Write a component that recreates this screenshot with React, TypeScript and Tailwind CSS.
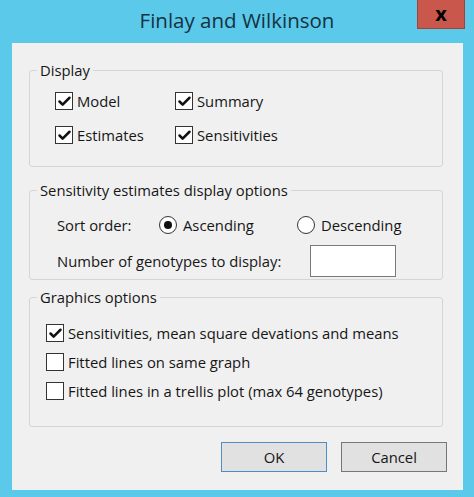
import { Check } from "lucide-react";

const font = { fontFamily: '"Open Sans", "Noto Sans", sans-serif' };

const CheckBox = ({ checked, label }: { checked: boolean; label: string }) => {
  return (
    <label className="flex items-center h-[18px]">
      <span className="w-[18px] h-[18px] border border-[#333333] bg-white flex items-center justify-center shrink-0">
        {checked && <Check size={15} strokeWidth={4} className="text-[#111111]" />}
      </span>
      <span className="ml-[4px] whitespace-nowrap">{label}</span>
    </label>
  );
};

const Radio = ({ checked, label }: { checked: boolean; label: string }) => {
  return (
    <label className="flex items-center h-[18px]">
      <span className="w-[18px] h-[18px] rounded-full border border-[#333333] bg-white flex items-center justify-center shrink-0">
        {checked && <span className="w-[8px] h-[8px] rounded-full bg-[#111111]" />}
      </span>
      <span className="ml-[6px] whitespace-nowrap">{label}</span>
    </label>
  );
};

const Group = ({
  title,
  className,
  children,
}: {
  title: string;
  className: string;
  children: React.ReactNode;
}) => {
  return (
    <fieldset className={`border border-[#d5d5d5] rounded-[3px] p-0 m-0 ${className}`}>
      <legend className="ml-[7px] px-[3px] leading-[20px]">{title}</legend>
      {children}
    </fieldset>
  );
};

export default function App() {
  return (
    <div
      className="w-[474px] h-[497px] bg-[#5bc9ea] flex flex-col text-[14.8px] text-[#161616] overflow-hidden"
      style={font}
    >
      {/* Title bar */}
      <div className="relative h-[43px] shrink-0 flex items-center justify-center">
        <span className="text-[20.5px] text-[#16323f] -mt-[2px]">Finlay and Wilkinson</span>
        <div className="absolute top-0 right-[9px] w-[48px] h-[29px] bg-[#c9574c] border border-[#a1433a] border-t-0 flex items-center justify-center">
          <span className="text-[20px] font-bold text-black leading-[20px]">x</span>
        </div>
      </div>

      {/* Client area */}
      <div className="ml-[12px] mr-[11px] mb-[7px] flex-1 bg-[#f0f0f0] pt-[17px] pl-[17px] pr-[20px]">
        <Group title="Display" className="h-[107px]">
          <div className="grid grid-cols-[120px_120px] gap-y-[16px] pl-[25px] pt-[12px]">
            <CheckBox checked label="Model" />
            <CheckBox checked label="Summary" />
            <CheckBox checked label="Estimates" />
            <CheckBox checked label="Sensitivities" />
          </div>
        </Group>

        <Group title="Sensitivity estimates display options" className="mt-[13px] h-[100px]">
          <div className="pl-[27px] pt-[14px]">
            <div className="flex items-center">
              <span className="w-[102px]">Sort order:</span>
              <div className="w-[138px]">
                <Radio checked label="Ascending" />
              </div>
              <Radio checked={false} label="Descending" />
            </div>
            <div className="flex items-center mt-[9px]">
              <span className="w-[253px]">Number of genotypes to display:</span>
              <div className="w-[86px] h-[32px] bg-white border border-[#7a7a7a]" />
            </div>
          </div>
        </Group>

        <Group title="Graphics options" className="mt-[7px] h-[140px]">
          <div className="flex flex-col gap-[11px] pl-[16px] pt-[17px]">
            <CheckBox checked label="Sensitivities, mean square devations and means" />
            <CheckBox checked={false} label="Fitted lines on same graph" />
            <CheckBox checked={false} label="Fitted lines in a trellis plot (max 64 genotypes)" />
          </div>
        </Group>

        <div className="flex justify-end gap-[14px] mt-[15px] -mr-[4px]">
          <button className="w-[106px] h-[30px] bg-[#e1e1e1] border border-[#4d8fc4]">OK</button>
          <button className="w-[106px] h-[30px] bg-[#e1e1e1] border border-[#767676]">Cancel</button>
        </div>
      </div>
    </div>
  );
}
